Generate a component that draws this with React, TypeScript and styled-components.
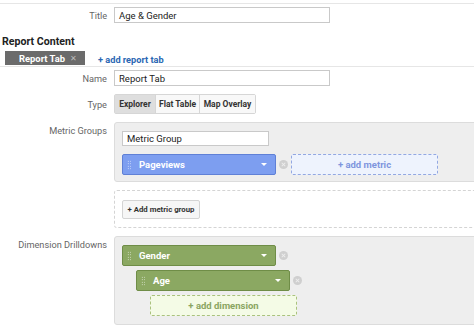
import * as React from "react"
import styled, { createGlobalStyle } from "styled-components"

const GlobalStyle = createGlobalStyle`
  body {
    margin: 0;
    background: #fff;
    overflow: hidden;
  }
`

const Page = styled.main`
  width: 480px;
  font-family: Roboto, "Liberation Sans", sans-serif;
  font-size: 10px;
  color: #333;
`

const Divider = styled.div<{ $top: number }>`
  border-top: 1px solid #e6e6e6;
  margin-top: ${(p) => p.$top}px;
`

const Row = styled.div<{ $top: number; $align?: string }>`
  display: grid;
  grid-template-columns: 107px 1fr;
  column-gap: 7px;
  align-items: ${(p) => p.$align || "center"};
  margin-top: ${(p) => p.$top}px;
`

const Label = styled.div<{ $pad?: number }>`
  text-align: right;
  color: #666;
  font-size: 9.2px;
  padding-top: ${(p) => p.$pad || 0}px;
`

const TextInput = styled.div<{ $w: number; $h: number }>`
  box-sizing: border-box;
  width: ${(p) => p.$w}px;
  height: ${(p) => p.$h}px;
  border: 1px solid #c9c9c9;
  background: #fff;
  padding: 0 4px;
  display: flex;
  align-items: center;
  font-size: 9.5px;
  color: #222;
`

const Heading = styled.h2`
  margin: 12px 0 0 2px;
  font-size: 10.6px;
  font-weight: 700;
  color: #222;
  line-height: 14px;
`

const TabBar = styled.div`
  display: flex;
  align-items: center;
  margin-top: 2px;
  padding-left: 5px;
  gap: 13px;
`

const Tab = styled.div`
  box-sizing: border-box;
  width: 80px;
  height: 14px;
  background: #6b6b6b;
  color: #fff;
  font-weight: 700;
  font-size: 9.4px;
  display: flex;
  align-items: center;
  gap: 5px;
  padding-left: 14px;

  span {
    color: #bbb;
    font-weight: 400;
    font-size: 8px;
  }
`

const TabLink = styled.a`
  color: #2b67b3;
  font-weight: 700;
  font-size: 9.2px;
  margin-top: 2px;
`

const Segmented = styled.div`
  display: flex;
  height: 20px;
  width: fit-content;
  border: 1px solid #d6d6d6;
  border-radius: 2px;
  box-sizing: border-box;
`

const Segment = styled.div<{ $active?: boolean; $w: number }>`
  width: ${(p) => p.$w}px;
  display: flex;
  align-items: center;
  justify-content: center;
  font-size: 8.5px;
  font-weight: 700;
  color: #333;
  background: ${(p) => (p.$active ? "#dedede" : "#f8f8f8")};
  border-left: 1px solid #d6d6d6;
  &:first-child {
    border-left: none;
  }
`

const Panel = styled.div<{ $pt: number; $pb: number; $gap: number }>`
  background: #eeeeee;
  border: 1px solid #dcdcdc;
  border-radius: 3px;
  padding: ${(p) => p.$pt}px 0 ${(p) => p.$pb}px 7px;
  display: flex;
  flex-direction: column;
  gap: ${(p) => p.$gap}px;
`

const DashedBox = styled.div`
  border: 1px dashed #d4d4d4;
  border-radius: 3px;
  height: 36px;
  display: flex;
  align-items: center;
  padding-left: 7px;
`

const ChipRow = styled.div<{ $indent?: number }>`
  display: flex;
  align-items: center;
  margin-left: ${(p) => p.$indent || 0}px;
`

const Chip = styled.div<{ $bg: string; $edge: string }>`
  box-sizing: border-box;
  width: 154px;
  height: 21px;
  background: ${(p) => p.$bg};
  border: 1px solid ${(p) => p.$edge};
  border-radius: 2px;
  display: flex;
  align-items: center;
  color: #fff;
  font-weight: 700;
  font-size: 9.5px;
  padding: 0 8px 0 4px;
`

const Grip = styled.span`
  width: 4px;
  height: 10px;
  margin-right: 8px;
  background-image: radial-gradient(circle, rgba(255, 255, 255, 0.85) 0.7px, transparent 0.8px);
  background-size: 2.5px 2.5px;
`

const ChipName = styled.span`
  flex: 1;
`

const Caret = styled.span`
  width: 0;
  height: 0;
  border-left: 3px solid transparent;
  border-right: 3px solid transparent;
  border-top: 3px solid #fff;
`

const Remove = styled.span`
  width: 9px;
  height: 9px;
  border-radius: 50%;
  background: #cfcfcf;
  margin-left: 3px;
  position: relative;
  flex: none;

  &::before,
  &::after {
    content: "";
    position: absolute;
    left: 4px;
    top: 2px;
    width: 1px;
    height: 5px;
    background: #eee;
    transform: rotate(45deg);
  }
  &::after {
    transform: rotate(-45deg);
  }
`

const AddSlot = styled.div<{ $bg: string; $edge: string; $fg: string; $ml: number; $w: number }>`
  box-sizing: border-box;
  width: ${(p) => p.$w}px;
  height: 21px;
  margin-left: ${(p) => p.$ml}px;
  background: ${(p) => p.$bg};
  border: 1px dashed ${(p) => p.$edge};
  border-radius: 2px;
  color: ${(p) => p.$fg};
  font-weight: 700;
  font-size: 9.5px;
  display: flex;
  align-items: center;
  justify-content: center;
`

const GrayButton = styled.div`
  box-sizing: border-box;
  width: 78px;
  height: 19px;
  background: #f6f6f6;
  border: 1px solid #d4d4d4;
  border-radius: 2px;
  display: flex;
  align-items: center;
  justify-content: center;
  font-size: 7.8px;
  font-weight: 700;
  color: #333;
  white-space: nowrap;
`

const BLUE = { bg: "#7d9ef0", edge: "#5f80d6" }
const GREEN = { bg: "#8ba862", edge: "#6f8d47" }

export default function App() {
  return (
    <Page>
      <GlobalStyle />
      <Divider $top={3} />
      <Row $top={3}>
        <Label>Title</Label>
        <TextInput $w={216} $h={16}>Age &amp; Gender</TextInput>
      </Row>

      <Heading>Report Content</Heading>
      <TabBar>
        <Tab>
          Report Tab <span>✕</span>
        </Tab>
        <TabLink>+ add report tab</TabLink>
      </TabBar>
      <Divider $top={1} />

      <Row $top={3}>
        <Label>Name</Label>
        <TextInput $w={216} $h={16}>Report Tab</TextInput>
      </Row>

      <Row $top={8}>
        <Label>Type</Label>
        <Segmented>
          <Segment $active $w={40}>Explorer</Segment>
          <Segment $w={43}>Flat Table</Segment>
          <Segment $w={55}>Map Overlay</Segment>
        </Segmented>
      </Row>

      <Row $top={8} $align="start">
        <Label $pad={3}>Metric Groups</Label>
        <Panel $pt={8} $pb={6} $gap={8}>
          <TextInput $w={147} $h={15}>Metric Group</TextInput>
          <ChipRow>
            <Chip $bg={BLUE.bg} $edge={BLUE.edge}>
              <Grip />
              <ChipName>Pageviews</ChipName>
              <Caret />
            </Chip>
            <Remove />
            <AddSlot $bg="#eef3fd" $edge="#93a8e2" $fg="#7f96dd" $ml={3} $w={147}>
              + add metric
            </AddSlot>
          </ChipRow>
        </Panel>
      </Row>

      <Row $top={8}>
        <div />
        <DashedBox>
          <GrayButton>+ Add metric group</GrayButton>
        </DashedBox>
      </Row>

      <Row $top={8} $align="start">
        <Label $pad={3}>Dimension Drilldowns</Label>
        <Panel $pt={8} $pb={8} $gap={4}>
          <ChipRow>
            <Chip $bg={GREEN.bg} $edge={GREEN.edge}>
              <Grip />
              <ChipName>Gender</ChipName>
              <Caret />
            </Chip>
            <Remove />
          </ChipRow>
          <ChipRow $indent={14}>
            <Chip $bg={GREEN.bg} $edge={GREEN.edge}>
              <Grip />
              <ChipName>Age</ChipName>
              <Caret />
            </Chip>
            <Remove />
          </ChipRow>
          <ChipRow>
            <AddSlot $bg="#f4fbe6" $edge="#aac27e" $fg="#8aa562" $ml={28} $w={147}>
              + add dimension
            </AddSlot>
          </ChipRow>
        </Panel>
      </Row>
    </Page>
  )
}
